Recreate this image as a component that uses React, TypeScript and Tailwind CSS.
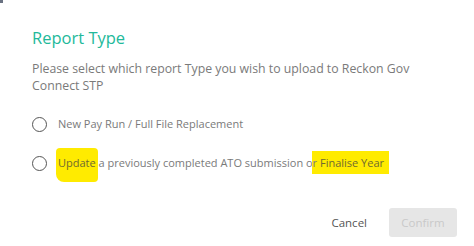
export default function App() {
  return (
    <div
      className="relative w-[474px] h-[246px] bg-white overflow-hidden"
      style={{ fontFamily: '"Open Sans", "Noto Sans", sans-serif' }}
    >
      <div className="absolute left-0 top-0 w-[3px] h-[3px] bg-gray-500" />
      <div className="pl-[32px] pr-[20px] pt-[27px]">
        <h2 className="text-[16.5px] leading-[22px] text-[#22b99a]">Report Type</h2>
        <p className="mt-[11px] text-[12.3px] leading-[17px] text-[#7a7a7a] w-[400px]">
          Please select which report Type you wish to upload to Reckon Gov Connect STP
        </p>

        <div className="mt-[21px] flex flex-col gap-[21px]">
          <label className="flex items-center gap-[11px] h-[18px]">
            <span className="w-[15px] h-[15px] rounded-full border-[1.5px] border-[#555]" />
            <span className="text-[11px] text-[#7a7a7a]">New Pay Run / Full File Replacement</span>
          </label>
          <label className="flex items-center gap-[11px] h-[18px]">
            <span className="w-[15px] h-[15px] rounded-full border-[1.5px] border-[#555]" />
            <span className="text-[11px] text-[#7a7a7a]">
              <span className="relative">
                <span className="absolute left-[-2px] right-[-2px] top-[-7px] bottom-[-12px] bg-[#ffeb00] rounded-[4px] rounded-bl-[8px]" />
                <span className="relative text-[#6f6a30]">Update</span>
              </span>{" "}
              a previously completed ATO submission o
              <span className="relative">
                <span className="absolute left-[-1px] right-[-5px] top-[-4px] bottom-[-4px] bg-[#ffeb00]" />
                <span className="relative">r </span>
                <span className="relative text-[#6f6a30]">Finalise Year</span>
              </span>
            </span>
          </label>
        </div>
      </div>

      <div className="absolute right-[17px] bottom-[9px] flex items-center gap-[22px]">
        <button className="text-[11.5px] text-[#555]">Cancel</button>
        <button className="w-[68px] h-[29px] rounded-[3px] bg-[#e6e6e6] text-[11.5px] text-[#c9c9c9]">
          Confirm
        </button>
      </div>
    </div>
  );
}
